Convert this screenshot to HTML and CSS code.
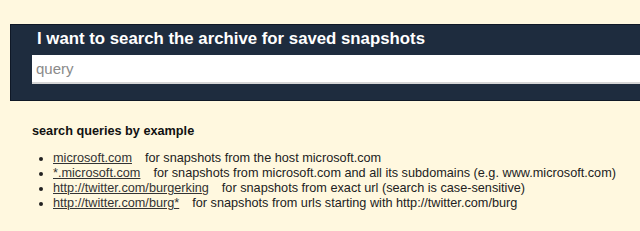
FILE: index.html
```html
<!DOCTYPE html>
<html lang="en">
<head>
    <meta charset="UTF-8">
    <title>archive search</title>
    <link rel="stylesheet" href="styles.css">
</head>
<body>
    <form class="search-box">
        <h2 class="search-title">I want to search the archive for saved snapshots</h2>
        <input class="search-input" type="text" placeholder="query">
    </form>

    <div class="examples">
        <h4 class="examples-title">search queries by example</h4>
        <ul class="examples-list">
            <li><a href="#">microsoft.com</a><span class="hint">for snapshots from the host microsoft.com</span></li>
            <li><a href="#">*.microsoft.com</a><span class="hint">for snapshots from microsoft.com and all its subdomains (e.g. www.microsoft.com)</span></li>
            <li><a href="#">http://twitter.com/burgerking</a><span class="hint">for snapshots from exact url (search is case-sensitive)</span></li>
            <li><a href="#">http://twitter.com/burg*</a><span class="hint">for snapshots from urls starting with http://twitter.com/burg</span></li>
        </ul>
    </div>
</body>
</html>
```

FILE: styles.css
```css
/* page */
body {
    margin: 0;
    background-color: #fff8df;
    font-family: "Liberation Sans", Arial, sans-serif;
    color: #222;
}

/* dark search box, runs off the right edge */
.search-box {
    margin: 24px 0 0 10px;
    background-color: #1e2c3e;
    border: 1px solid #0f1826;
    border-right: none;
    padding: 3px 0 16px 21px;
}

.search-title {
    margin: 0 0 5px 5px;
    font-size: 16.8px;
    line-height: 22px;
    font-weight: bold;
    color: #fff;
}

.search-input {
    display: block;
    width: 100%;
    height: 29px;
    box-sizing: border-box;
    margin: 0;
    border: none;
    border-bottom: 2px solid #d6d6d6;
    padding: 0 4px;
    font-family: "Liberation Sans", Arial, sans-serif;
    font-size: 15px;
    background: #fff;
}

.search-input::placeholder {
    color: #8a8a8a;
}

/* examples */
.examples {
    padding: 22px 0 0 32px;
}

.examples-title {
    margin: 0 0 12px 0;
    font-size: 12.7px;
    line-height: 16px;
    font-weight: bold;
    color: #111;
}

.examples-list {
    margin: 0;
    padding-left: 21px;
    font-size: 12.7px;
    line-height: 15px;
}

.examples-list a {
    color: #333;
}

.hint {
    margin-left: 13px;
}
```
